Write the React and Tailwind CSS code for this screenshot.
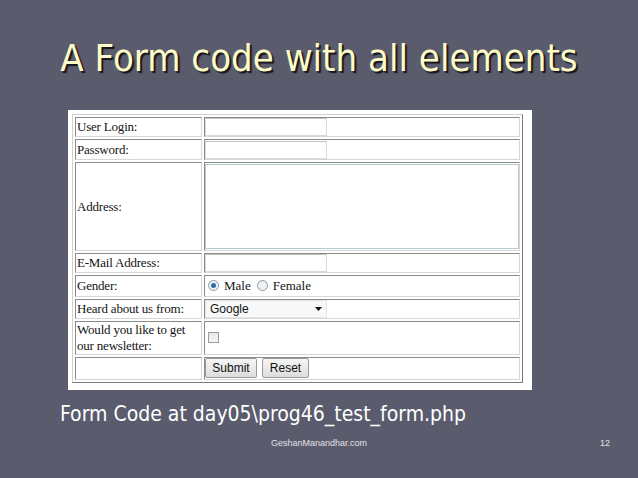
import React from "react";

function Label({ children }) {
  return (
    <td className="w-[127px] border border-t-[#8a8a8a] border-l-[#8a8a8a] border-b-[#d6d6d6] border-r-[#d6d6d6] px-[1px] py-0 align-middle text-[13px] leading-[16px] tracking-[-0.2px] text-[#141414] font-['Liberation_Serif',serif]">
      {children}
    </td>
  );
}

function Field({ children }) {
  return (
    <td className="border border-t-[#8a8a8a] border-l-[#8a8a8a] border-b-[#d6d6d6] border-r-[#d6d6d6] p-0 align-middle">
      {children}
    </td>
  );
}

function TextInput() {
  return (
    <div className="h-[18px] w-[122px] border border-[#dadada] border-t-[#c4c4c4] bg-white" />
  );
}

function Radio({ checked }) {
  return (
    <span className="inline-flex h-[11px] w-[11px] items-center justify-center rounded-full border border-[#8e9aa6] bg-[#eef0f3]">
      {checked && <span className="h-[5px] w-[5px] rounded-full bg-[#2a6ea8]" />}
    </span>
  );
}

function Button({ children, w }) {
  return (
    <span
      className={`inline-flex h-[20px] items-center justify-center rounded-[2px] border border-[#9a9a9a] bg-gradient-to-b from-[#f6f6f6] to-[#dcdcdc] text-[12px] text-[#111] font-['Liberation_Sans',sans-serif] ${w}`}
    >
      {children}
    </span>
  );
}

export default function App() {
  return (
    <div className="relative flex h-[478px] w-[638px] flex-col overflow-hidden bg-[#5a5c6d]">
      <div className="flex h-[110px] justify-center pt-[34px]">
        <h1 className="text-[38px] leading-[48px] text-[#fdfcc8] font-['DejaVu_Sans',sans-serif] font-stretch-condensed [text-shadow:2px_2px_1px_#15151c]">
          A Form code with all elements
        </h1>
      </div>

      <div className="ml-[68px] h-[280px] w-[464px] bg-white pl-[4px] pt-[4px]">
        <table className="w-[451px] border-separate border-spacing-[2px] border border-t-[#d0d0d0] border-l-[#d0d0d0] border-b-[#7a7a7a] border-r-[#7a7a7a]">
          <tbody>
            <tr className="h-[20px]">
              <Label>User Login:</Label>
              <Field>
                <TextInput />
              </Field>
            </tr>
            <tr className="h-[21px]">
              <Label>Password:</Label>
              <Field>
                <TextInput />
              </Field>
            </tr>
            <tr className="h-[89px]">
              <Label>Address:</Label>
              <Field>
                <div className="h-[85px] w-[314px] border border-[#b9c9d2] bg-white" />
              </Field>
            </tr>
            <tr className="h-[20px]">
              <Label>E-Mail Address:</Label>
              <Field>
                <TextInput />
              </Field>
            </tr>
            <tr className="h-[21px]">
              <Label>Gender:</Label>
              <Field>
                <div className="flex items-center pl-[3px] text-[13px] text-[#141414] font-['Liberation_Serif',serif]">
                  <Radio checked />
                  <span className="ml-[5px]">Male</span>
                  <span className="ml-[6px] flex">
                    <Radio />
                  </span>
                  <span className="ml-[5px]">Female</span>
                </div>
              </Field>
            </tr>
            <tr className="h-[20px]">
              <Label>Heard about us from:</Label>
              <Field>
                <div className="flex h-[18px] w-[122px] items-center justify-between border border-[#e4e4e4] bg-[#f8f8f8] pl-[4px] pr-[4px] text-[12px] text-[#111] font-['Liberation_Sans',sans-serif]">
                  <span>Google</span>
                  <svg width="7" height="4" viewBox="0 0 7 4">
                    <path d="M0 0h7L3.5 4z" fill="#111" />
                  </svg>
                </div>
              </Field>
            </tr>
            <tr className="h-[34px]">
              <Label>
                Would you like to get
                <br />
                our newsletter:
              </Label>
              <Field>
                <div className="ml-[3px] h-[11px] w-[11px] border border-[#9c9c9c] bg-gradient-to-b from-[#e6e6e6] to-[#f6f6f6]" />
              </Field>
            </tr>
            <tr className="h-[23px]">
              <Label>&nbsp;</Label>
              <Field>
                <div className="flex items-center gap-[5px]">
                  <Button w="w-[52px]">Submit</Button>
                  <Button w="w-[47px]">Reset</Button>
                </div>
              </Field>
            </tr>
          </tbody>
        </table>
      </div>

      <div className="mt-[10px] pl-[60px] text-[21px] leading-[28px] text-white font-['DejaVu_Sans',sans-serif] font-stretch-condensed">
        {"Form Code at day05\\prog46_test_form.php"}
      </div>

      <div className="relative mt-[8px] h-[14px] text-[9px] leading-[14px] text-[#e2e2e8] font-['Liberation_Sans',sans-serif]">
        <div className="text-center">GeshanManandhar.com</div>
        <div className="absolute right-[28px] top-0">12</div>
      </div>
    </div>
  );
}
